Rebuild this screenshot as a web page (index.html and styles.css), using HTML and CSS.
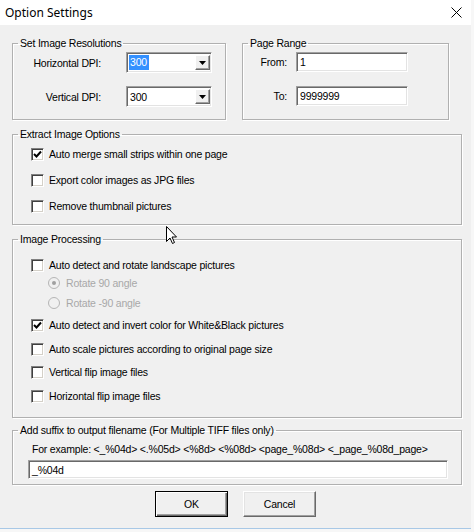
FILE: index.html
```html
<!DOCTYPE html>
<html>
<head>
<meta charset="utf-8">
<link rel="stylesheet" href="styles.css">
</head>
<body>
<div class="window">
  <div class="titlebar">
    <span class="title">Option Settings</span>
    <svg class="close" width="11" height="11" viewBox="0 0 11 11"><path d="M0.5 0.5 L10.5 10.5 M10.5 0.5 L0.5 10.5" stroke="#000" stroke-width="1"/></svg>
  </div>
  <div class="content">
    <div class="toprow">
      <fieldset class="group g-res">
        <legend>Set Image Resolutions</legend>
        <div class="res-grid">
          <label class="lbl">Horizontal DPI:</label>
          <div class="combo">
            <span class="combo-text"><span class="sel">300</span></span>
            <span class="combo-btn"><svg width="7" height="4" viewBox="0 0 7 4"><path d="M0 0 H7 L3.5 4 Z" fill="#000"/></svg></span>
          </div>
          <label class="lbl">Vertical DPI:</label>
          <div class="combo">
            <span class="combo-text plain">300</span>
            <span class="combo-btn"><svg width="7" height="4" viewBox="0 0 7 4"><path d="M0 0 H7 L3.5 4 Z" fill="#000"/></svg></span>
          </div>
        </div>
      </fieldset>
      <fieldset class="group g-range">
        <legend>Page Range</legend>
        <div class="range-grid">
          <label class="lbl">From:</label>
          <div class="input">1</div>
          <label class="lbl">To:</label>
          <div class="input">9999999</div>
        </div>
      </fieldset>
    </div>

    <fieldset class="group g-extract">
      <legend>Extract Image Options</legend>
      <div class="extract-body">
        <div class="check-row"><span class="cb"><svg width="9" height="9" viewBox="0 0 9 9"><path d="M1 4 L3.5 6.5 L8 1.5" fill="none" stroke="#000" stroke-width="2"/></svg></span><span>Auto merge small strips within one page</span></div>
        <div class="check-row"><span class="cb"></span><span>Export color images as JPG files</span></div>
        <div class="check-row"><span class="cb"></span><span>Remove thumbnail pictures</span></div>
      </div>
    </fieldset>

    <fieldset class="group g-proc">
      <legend>Image Processing</legend>
      <div class="proc-body">
        <div class="prow r1"><span class="cb"></span><span>Auto detect and rotate landscape pictures</span></div>
        <div class="prow radio-row r2"><span class="rb on"></span><span>Rotate 90 angle</span></div>
        <div class="prow radio-row r3"><span class="rb"></span><span>Rotate -90 angle</span></div>
        <div class="prow r4"><span class="cb"><svg width="9" height="9" viewBox="0 0 9 9"><path d="M1 4 L3.5 6.5 L8 1.5" fill="none" stroke="#000" stroke-width="2"/></svg></span><span>Auto detect and invert color for White&amp;Black pictures</span></div>
        <div class="prow r5"><span class="cb"></span><span>Auto scale pictures according to original page size</span></div>
        <div class="prow r6"><span class="cb"></span><span>Vertical flip image files</span></div>
        <div class="prow r7"><span class="cb"></span><span>Horizontal flip image files</span></div>
      </div>
    </fieldset>

    <fieldset class="group g-suffix">
      <legend>Add suffix to output filename (For Multiple TIFF files only)</legend>
      <div class="suffix-body">
        <div class="example">For example: &lt;_%04d&gt; &lt;.%05d&gt; &lt;%8d&gt; &lt;%08d&gt; &lt;page_%08d&gt; &lt;_page_%08d_page&gt;</div>
        <div class="input wide">_%04d</div>
      </div>
    </fieldset>

    <div class="buttons">
      <div class="btn default">OK</div>
      <div class="btn">Cancel</div>
    </div>
  </div>
  <svg class="cursor" width="12" height="19" viewBox="0 0 12 19"><path d="M0.5 0.5 V15.5 L4 12 L6.5 17.5 L8.5 16.5 L6 11 H10.5 Z" fill="#fff" stroke="#000" stroke-width="1" stroke-linejoin="round"/></svg>
</div>
</body>
</html>
```

FILE: styles.css
```css
* { box-sizing: border-box; }
html, body { margin: 0; padding: 0; }
body {
  background: #f7f7f7;
  font-family: "Liberation Sans", Arial, sans-serif;
  font-size: 10.5px;
  letter-spacing: -0.2px;
  color: #000;
}
.window {
  position: relative;
  width: 471px;
  height: 529px;
  background: #f0f0f0;
  border-bottom: 1px solid #a8c8e6;
}
.titlebar {
  height: 25px;
  background: #fff;
  display: flex;
  align-items: center;
  justify-content: space-between;
  padding: 0 9px 0 5px;
}
.title {
  font-family: "Noto Sans", "Open Sans", sans-serif;
  font-size: 12px;
  letter-spacing: 0;
}
.close { display: block; }
.content {
  padding: 11px 9px 0 12px;
}
.toprow {
  display: flex;
}
.group {
  margin: 0;
  padding: 0;
  min-width: 0;
  border: 1px solid #b0b0b0;
  box-shadow: inset 1px 1px 0 #fff, 1px 1px 0 #fff;
}
.group legend {
  margin-left: 5px;
  padding: 0 2px;
  line-height: 14px;
}
.g-res { width: 214px; }
.g-range { width: 207px; margin-left: 16px; }
.res-grid {
  display: grid;
  grid-template-columns: 88px 86px;
  grid-template-rows: 21px 21px;
  column-gap: 25px;
  row-gap: 13px;
  padding: 2px 0 12px 0;
  align-items: center;
}
.range-grid {
  display: grid;
  grid-template-columns: 44px 112px;
  grid-template-rows: 20px 20px;
  column-gap: 9px;
  row-gap: 14px;
  padding: 2px 0 13px 0;
  align-items: center;
}
.lbl { text-align: right; }
.combo {
  height: 21px;
  display: flex;
  background: #fff;
  border: 1px solid;
  border-color: #a0a0a0 #fff #fff #a0a0a0;
  box-shadow: inset 1px 1px 0 #696969, inset -1px -1px 0 #e3e3e3;
  padding: 2px;
}
.combo-text {
  flex: 1;
  display: flex;
  align-items: center;
}
.combo-text.plain { padding-left: 1px; }
.sel {
  background: #3390ff;
  color: #fff;
  padding: 0 2px 0 1px;
  line-height: 15px;
}
.combo-btn {
  width: 15px;
  display: flex;
  align-items: center;
  justify-content: center;
  background: #f0f0f0;
  border: 1px solid;
  border-color: #fff #696969 #696969 #fff;
  box-shadow: inset -1px -1px 0 #a0a0a0;
  margin-right: -1px;
}
.input {
  height: 20px;
  background: #fff;
  border: 1px solid;
  border-color: #a0a0a0 #fff #fff #a0a0a0;
  box-shadow: inset 1px 1px 0 #696969, inset -1px -1px 0 #e3e3e3;
  padding: 0 3px;
  display: flex;
  align-items: center;
}
.g-extract { margin-top: 7px; }
.extract-body { padding: 0 0 5px 18px; }
.check-row {
  height: 26px;
  display: flex;
  align-items: center;
  gap: 5px;
}
.cb {
  width: 13px;
  height: 13px;
  flex: none;
  background: #fff;
  border: 1px solid;
  border-color: #808080 #fff #fff #808080;
  box-shadow: inset 1px 1px 0 #404040, inset -1px -1px 0 #d4d0c8;
  display: flex;
  align-items: center;
  justify-content: center;
}
.g-proc { margin-top: 7px; }
.proc-body { padding: 11px 0 13px 18px; }
.prow {
  height: 16px;
  display: flex;
  align-items: center;
  gap: 5px;
}
.radio-row { padding-left: 17px; color: #a8a8a8; }
.r2 { margin-top: 2px; }
.r3 { margin-top: 4px; }
.r4 { margin-top: 6px; }
.r5 { margin-top: 8px; }
.r6 { margin-top: 7px; }
.r7 { margin-top: 8px; }
.rb {
  width: 12px;
  height: 12px;
  flex: none;
  border-radius: 50%;
  border: 1px solid #b5b5b5;
  background: #f0f0f0;
  display: flex;
  align-items: center;
  justify-content: center;
  margin-right: 1px;
}
.rb.on::after {
  content: "";
  width: 4px;
  height: 4px;
  border-radius: 50%;
  background: #a0a0a0;
}
.g-suffix { margin-top: 5px; }
.suffix-body { padding: 5px 0 5px 15px; }
.example { margin-left: 4px; line-height: 14px; white-space: nowrap; }
.input.wide { width: 420px; height: 19px; margin-top: 4px; }
.buttons {
  display: flex;
  justify-content: center;
  gap: 15px;
  margin-top: 6px;
  padding-right: 3px;
}
.btn {
  width: 73px;
  height: 26px;
  display: flex;
  align-items: center;
  justify-content: center;
  background: #f0f0f0;
  border: 1px solid;
  border-color: #fff #696969 #696969 #fff;
  box-shadow: inset -1px -1px 0 #a0a0a0, inset 1px 1px 0 #e3e3e3;
}
.btn.default {
  border: 1px solid #000;
  box-shadow: inset 1px 1px 0 #fff, inset -1px -1px 0 #696969, inset -2px -2px 0 #a0a0a0;
}
.cursor {
  position: absolute;
  left: 166px;
  top: 226px;
}
```
